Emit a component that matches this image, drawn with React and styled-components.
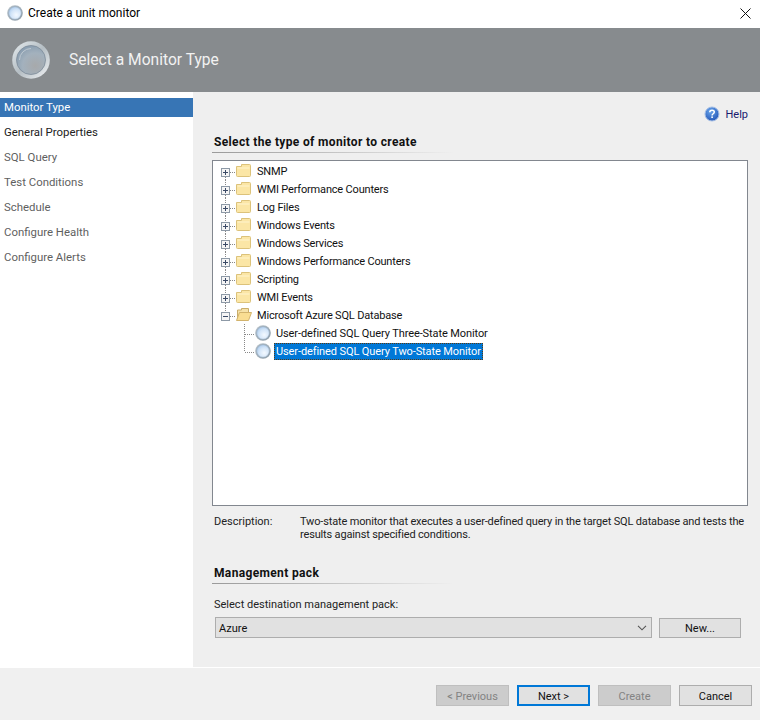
import React from "react";
import styled, { createGlobalStyle } from "styled-components";

const GlobalStyle = createGlobalStyle`
  html, body {
    margin: 0;
    padding: 0;
    background: #f0f0f0;
  }
  body {
    font-family: Roboto, "Liberation Sans", sans-serif;
    font-size: 11px;
    color: #111;
  }
`;

const Window = styled.div`
  width: 760px;
  height: 720px;
  display: flex;
  flex-direction: column;
  overflow: hidden;
`;

const TitleBar = styled.div`
  height: 28px;
  background: #fff;
  display: flex;
  align-items: center;
  padding: 0 9px 2px 7px;
  box-sizing: border-box;
  gap: 5px;
  font-size: 12px;
  color: #000;
`;

const TitleText = styled.span`
  flex: 1;
`;

const Banner = styled.div`
  height: 64px;
  background: #878b8e;
  display: flex;
  align-items: center;
  padding-left: 12px;
  gap: 19px;
  font-size: 15.6px;
  color: #f2f2f2;
`;

const Body = styled.div`
  flex: 1;
  display: flex;
  min-height: 0;
`;

const Sidebar = styled.nav`
  flex: none;
  width: 193px;
  background: #fff;
  padding-top: 6px;
  box-sizing: border-box;
  display: flex;
  flex-direction: column;
  gap: 6px;
`;

const Step = styled.div`
  height: 19px;
  line-height: 19px;
  padding-left: 4px;
  font-size: 11.4px;
  color: ${p => (p.$active ? "#fff" : p.$done ? "#222" : "#5f5f5f")};
  background: ${p => (p.$active ? "#3775b5" : "transparent")};
`;

const Main = styled.main`
  flex: 1;
  min-width: 0;
  background: #efefef;
  padding: 13px 12px 0 19px;
  box-sizing: border-box;
  display: flex;
  flex-direction: column;
`;

const HelpRow = styled.div`
  height: 18px;
  display: flex;
  justify-content: flex-end;
  align-items: center;
  gap: 5px;
  color: #1a1a6e;
`;

const SectionTitle = styled.h2`
  margin: 0;
  font-size: 12px;
  line-height: 16px;
  font-weight: 700;
  letter-spacing: 0.35px;
  color: #111;
  padding: 0 0 3px 2px;
  margin-top: ${p => p.$top || 0}px;
  margin-bottom: ${p => p.$bottom || 0}px;
  width: 240px;
  background: linear-gradient(to right, #9a9a9a, #efefef) left bottom / 100% 1px no-repeat;
`;

const Tree = styled.div`
  margin-top: 7px;
  height: 346px;
  width: 536px;
  box-sizing: border-box;
  background: #fff;
  border: 1px solid #82878f;
  padding-top: 1px;
`;

const TreeRow = styled.div`
  height: 18px;
  display: flex;
  align-items: center;
  padding-left: ${p => (p.$child ? 30 : 5)}px;
  color: #111;
`;

const Guide = styled.svg`
  flex: none;
  display: block;
`;

const FolderIcon = styled.svg`
  flex: none;
  display: block;
  margin-bottom: 2px;
`;

const RowLabel = styled.span`
  margin-left: ${p => (p.$gap ? p.$gap : 3)}px;
  white-space: nowrap;
  line-height: 15px;
  padding: 1px 2px;
  letter-spacing: ${p => (p.$gap ? -0.18 : -0.1)}px;
  ${p => p.$selected && `
    height: 15px;
    padding: 0 1px;
    background: #0078d7;
    color: #fff;
    border: 1px dotted #5c3a10;
  `}
`;

const Description = styled.div`
  display: flex;
  margin-top: 9px;
  padding-left: 2px;
  line-height: 13px;
  color: #222;
  white-space: nowrap;
`;

const DescLabel = styled.div`
  width: 86px;
  flex: none;
`;

const DescText = styled.div`
  letter-spacing: -0.16px;
`;

const FieldLabel = styled.div`
  color: #222;
  padding-left: 2px;
  line-height: 15px;
  margin-bottom: 5px;
`;

const PickRow = styled.div`
  display: flex;
  gap: 7px;
  align-items: center;
  margin-left: 3px;
`;

const Combo = styled.div`
  width: 437px;
  height: 21px;
  box-sizing: border-box;
  background: #e1e1e1;
  border: 1px solid #adadad;
  display: flex;
  align-items: center;
  justify-content: space-between;
  padding: 1px 4px 0 3px;
  color: #111;
`;

const Button = styled.button`
  font: inherit;
  height: ${p => p.$height || 21}px;
  width: ${p => p.$width || 73}px;
  padding: 1px 0 0;
  box-sizing: border-box;
  color: ${p => (p.disabled ? "#838383" : "#111")};
  background: ${p => (p.disabled ? "#cccccc" : "#e1e1e1")};
  border: ${p => (p.$primary ? "2px solid #0078d7" : p.disabled ? "1px solid #bfbfbf" : "1px solid #adadad")};
`;

const Footer = styled.footer`
  height: 53px;
  box-sizing: border-box;
  background: #f0f0f0;
  border-top: 1px solid #fff;
  display: flex;
  justify-content: flex-end;
  gap: 8px;
  padding: 17px 8px 0 0;
`;

const Orb = ({ size = 16, id }) => (
  <svg width={size} height={size} viewBox="0 0 16 16" style={{ flex: "none", display: "block" }}>
    <defs>
      <linearGradient id={`${id}r`} x1="0" y1="0" x2="1" y2="1">
        <stop offset="0" stopColor="#b9c4cc" />
        <stop offset="1" stopColor="#8b9aa6" />
      </linearGradient>
      <radialGradient id={`${id}f`} cx="0.6" cy="0.65" r="0.75">
        <stop offset="0" stopColor="#f4f9ff" />
        <stop offset="0.55" stopColor="#d3e5f8" />
        <stop offset="1" stopColor="#a3c5ea" />
      </radialGradient>
    </defs>
    <circle cx="8" cy="8" r="7.8" fill={`url(#${id}r)`} />
    <circle cx="8" cy="8" r="6.3" fill={`url(#${id}f)`} stroke="#8ea5ba" strokeWidth="0.5" />
  </svg>
);

const BannerOrb = () => (
  <svg width="38" height="38" viewBox="0 0 38 38" style={{ display: "block" }}>
    <defs>
      <linearGradient id="bannerRing" x1="0" y1="0" x2="1" y2="1">
        <stop offset="0" stopColor="#e6ecef" />
        <stop offset="0.5" stopColor="#b5bec4" />
        <stop offset="1" stopColor="#f2f4f6" />
      </linearGradient>
      <radialGradient id="bannerFill" cx="0.65" cy="0.7" r="0.8">
        <stop offset="0" stopColor="#a7a9ab" />
        <stop offset="0.55" stopColor="#a3b1bd" />
        <stop offset="1" stopColor="#8399ad" />
      </radialGradient>
    </defs>
    <circle cx="19" cy="19" r="18.8" fill="url(#bannerRing)" />
    <circle cx="19" cy="19" r="14.5" fill="url(#bannerFill)" stroke="#7d8c99" strokeWidth="0.8" />
    <path d="M7.5 19a11.5 11.5 0 0 1 11.5-11.5" fill="none" stroke="#c2ccd4" strokeWidth="0.9" />
  </svg>
);

const HelpIcon = () => (
  <svg width="16" height="16" viewBox="0 0 16 16" style={{ display: "block" }}>
    <defs>
      <radialGradient id="helpFill" cx="0.4" cy="0.3" r="0.8">
        <stop offset="0" stopColor="#6aa5ea" />
        <stop offset="1" stopColor="#1c4fb2" />
      </radialGradient>
    </defs>
    <circle cx="8" cy="8" r="7" fill="url(#helpFill)" stroke="#a5bfe6" strokeWidth="1" />
    <path d="M5.8 6.3c0-1.3 1-2 2.3-2 1.3 0 2.2.7 2.2 1.8 0 1.7-2.2 1.6-2.2 3.3" fill="none" stroke="#fff" strokeWidth="1.5" />
    <rect x="7.3" y="10.4" width="1.6" height="1.6" fill="#fff" />
  </svg>
);

const CloseIcon = () => (
  <svg width="11" height="11" viewBox="0 0 11 11" style={{ display: "block" }}>
    <path d="M.5.5l10 10M10.5.5l-10 10" stroke="#111" strokeWidth="1" fill="none" />
  </svg>
);

const Chevron = () => (
  <svg width="10" height="6" viewBox="0 0 10 6" style={{ display: "block" }}>
    <path d="M1 .8l4 4 4-4" stroke="#555" strokeWidth="1.1" fill="none" />
  </svg>
);

const Folder = () => (
  <FolderIcon width="15" height="14" viewBox="0 0 15 14">
    <path d="M.5 3.5h5V1.5h8a1 1 0 0 1 1 1v10a1 1 0 0 1-1 1h-12a1 1 0 0 1-1-1z" fill="#fbe6a6" stroke="#dcc27a" />
    <path d="M1.5 4.5h12v1h-12z" fill="#fff5cf" />
  </FolderIcon>
);

const OpenFolder = () => (
  <FolderIcon width="16" height="14" viewBox="0 0 16 14">
    <path d="M1.5 12V3h4V1.5h7V5" fill="#f6e2a8" stroke="#c9ad6a" />
    <path d="M3.5 5.5h12l-3 8h-12z" fill="#f9dd92" stroke="#d2b36c" />
  </FolderIcon>
);

// expander box plus the dotted lines that tie the root rows together
const Expander = ({ open, last, first }) => (
  <Guide width="18" height="18" viewBox="0 0 18 18">
    {!first && <path d="M7.5 0v6" stroke="#888" strokeDasharray="1 1" />}
    {!last && <path d="M7.5 15v3" stroke="#888" strokeDasharray="1 1" />}
    <path d="M12 10.5h6" stroke="#888" strokeDasharray="1 1" />
    <rect x="3.5" y="6.5" width="8" height="8" fill="#f5f5f5" stroke="#8d99a6" />
    <path d="M5 10.5h5" stroke="#3b4a66" />
    {!open && <path d="M7.5 8v5" stroke="#3b4a66" />}
  </Guide>
);

const ChildLine = ({ last }) => (
  <Guide width="12" height="18" viewBox="0 0 12 18">
    <path d={last ? "M1.5 0v10" : "M1.5 0v18"} stroke="#888" strokeDasharray="1 1" />
    <path d="M2 10.5h10" stroke="#888" strokeDasharray="1 1" />
  </Guide>
);

const steps = ["Monitor Type", "General Properties", "SQL Query", "Test Conditions", "Schedule", "Configure Health", "Configure Alerts"];

const folders = ["SNMP", "WMI Performance Counters", "Log Files", "Windows Events", "Windows Services", "Windows Performance Counters", "Scripting", "WMI Events"];

export default function App() {
  return (
    <Window>
      <GlobalStyle />
      <TitleBar>
        <Orb id="title" />
        <TitleText>Create a unit monitor</TitleText>
        <CloseIcon />
      </TitleBar>
      <Banner>
        <BannerOrb />
        Select a Monitor Type
      </Banner>
      <Body>
        <Sidebar>
          {steps.map((s, i) => (
            <Step key={s} $active={i === 0} $done={i === 1}>{s}</Step>
          ))}
        </Sidebar>
        <Main>
          <HelpRow>
            <HelpIcon />
            Help
          </HelpRow>
          <SectionTitle $top={11}>Select the type of monitor to create</SectionTitle>
          <Tree>
            {folders.map((f, i) => (
              <TreeRow key={f}>
                <Expander first={i === 0} />
                <Folder />
                <RowLabel $gap={4}>{f}</RowLabel>
              </TreeRow>
            ))}
            <TreeRow>
              <Expander open last />
              <OpenFolder />
              <RowLabel $gap={3}>Microsoft Azure SQL Database</RowLabel>
            </TreeRow>
            <TreeRow $child>
              <ChildLine />
              <Orb id="three" />
              <RowLabel>User-defined SQL Query Three-State Monitor</RowLabel>
            </TreeRow>
            <TreeRow $child>
              <ChildLine last />
              <Orb id="two" />
              <RowLabel $selected>User-defined SQL Query Two-State Monitor</RowLabel>
            </TreeRow>
          </Tree>
          <Description>
            <DescLabel>Description:</DescLabel>
            <DescText>
              Two-state monitor that executes a user-defined query in the target SQL database and tests the
              <br />
              results against specified conditions.
            </DescText>
          </Description>
          <SectionTitle $top={24} $bottom={13}>Management pack</SectionTitle>
          <FieldLabel>Select destination management pack:</FieldLabel>
          <PickRow>
            <Combo>
              Azure
              <Chevron />
            </Combo>
            <Button $width={82} $height={20}>New...</Button>
          </PickRow>
        </Main>
      </Body>
      <Footer>
        <Button disabled>&lt; Previous</Button>
        <Button $primary>Next &gt;</Button>
        <Button disabled>Create</Button>
        <Button>Cancel</Button>
      </Footer>
    </Window>
  );
}
